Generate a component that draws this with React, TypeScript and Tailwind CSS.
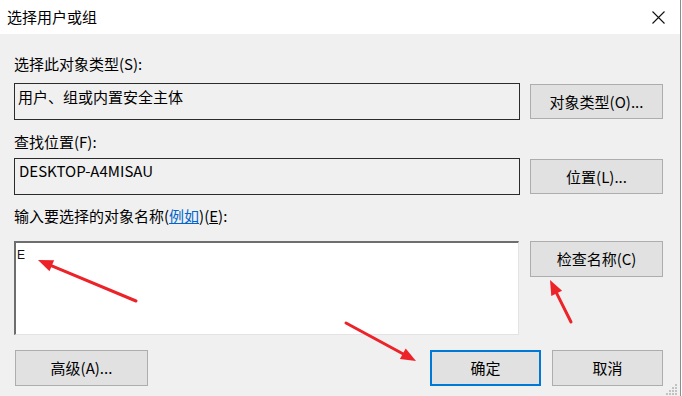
import React from "react";

const font = "font-['Noto_Sans_CJK_SC',sans-serif]";

const DlgButton = ({ label, className = "" }: { label: string; className?: string }) => (
  <button
    className={`flex items-center justify-center bg-[#e1e1e1] border border-[#adadad] text-[15px] leading-[20px] text-black ${className}`}
  >
    {label}
  </button>
);

const Arrows = () => (
  <svg className="absolute left-0 top-0 pointer-events-none" width="682" height="396" viewBox="0 0 682 396">
    <g stroke="#ec2328" strokeWidth="3" strokeLinecap="round" fill="#ec2328">
      <line x1="136" y1="301" x2="51.8" y2="265.8" />
      <polygon points="38,260 54.1,260.3 49.5,271.3" stroke="none" />
      <line x1="571" y1="322" x2="556.7" y2="293.4" />
      <polygon points="550,280 562.1,290.7 551.3,296.1" stroke="none" />
      <line x1="346" y1="323" x2="402.8" y2="353.8" />
      <polygon points="416,361 399.9,359.1 405.7,348.5" stroke="none" />
    </g>
  </svg>
);

const ResizeGrip = () => (
  <svg className="absolute right-[4px] bottom-0" width="12" height="12" viewBox="0 0 12 12">
    <g fill="#c2c2c2">
      <rect x="9" y="0" width="2" height="2" />
      <rect x="6" y="3" width="2" height="2" />
      <rect x="9" y="3" width="2" height="2" />
      <rect x="3" y="6" width="2" height="2" />
      <rect x="6" y="6" width="2" height="2" />
      <rect x="9" y="6" width="2" height="2" />
      <rect x="0" y="9" width="2" height="2" />
      <rect x="3" y="9" width="2" height="2" />
      <rect x="6" y="9" width="2" height="2" />
      <rect x="9" y="9" width="2" height="2" />
    </g>
  </svg>
);

export default function App() {
  return (
    <div className={`relative w-[682px] h-[396px] overflow-hidden bg-white ${font}`}>
      <div className="flex h-full w-[681px] flex-col border-r border-[#8c8c8c]">
        {/* title bar */}
        <div className="flex h-[34px] items-center justify-between bg-white pl-[7px] pr-[15px]">
          <span className="text-[15px] leading-[20px] text-black">选择用户或组</span>
          <svg width="13" height="13" viewBox="0 0 13 13">
            <path d="M0.5 0.5 L12.5 12.5 M12.5 0.5 L0.5 12.5" stroke="#111" strokeWidth="1.1" />
          </svg>
        </div>

        {/* body */}
        <div className="flex flex-1 flex-col bg-[#f0f0f0] pl-[14px] pt-[20px] text-[15px] leading-[20px] text-black">
          <div className="h-[20px]">选择此对象类型(S):</div>
          <div className="mt-[9px] flex items-center gap-[10px]">
            <div className="h-[37px] w-[506px] border border-[#2b2b2b] pl-[3px] pt-[3px]">用户、组或内置安全主体</div>
            <DlgButton label="对象类型(O)..." className="h-[35px] w-[133px]" />
          </div>

          <div className="mt-[12px] h-[20px]">查找位置(F):</div>
          <div className="mt-[6px] flex items-center gap-[10px]">
            <div className="h-[37px] w-[506px] border border-[#2b2b2b] pl-[4px] pt-[2px]">DESKTOP-A4MISAU</div>
            <DlgButton label="位置(L)..." className="h-[35px] w-[133px]" />
          </div>

          <div className="mt-[11px] h-[20px]">
            输入要选择的对象名称(<span className="text-[#0066cc] underline">例如</span>)(<span className="underline">E</span>):
          </div>
          <div className="mt-[15px] flex items-start gap-[11px]">
            <div className="h-[94px] w-[505px] border-l-2 border-t-2 border-r border-b border-l-[#6e6e6e] border-t-[#6e6e6e] border-r-[#e3e3e3] border-b-[#e3e3e3] bg-white pl-[1px] pt-[5px] font-['Liberation_Sans',sans-serif] text-[12px] leading-[14px] text-[#111]">
              E
            </div>
            <DlgButton label="检查名称(C)" className="h-[36px] w-[133px]" />
          </div>

          <div className="mt-[15px] flex items-center">
            <DlgButton label="高级(A)..." className="ml-[1px] h-[36px] w-[133px]" />
            <button className="ml-[282px] flex h-[36px] w-[111px] items-center justify-center border-2 border-[#0078d7] bg-[#e1e1e1] text-[15px] leading-[20px] text-black">
              确定
            </button>
            <DlgButton label="取消" className="ml-[11px] h-[36px] w-[111px]" />
          </div>
        </div>
      </div>
      <ResizeGrip />
      <Arrows />
    </div>
  );
}
